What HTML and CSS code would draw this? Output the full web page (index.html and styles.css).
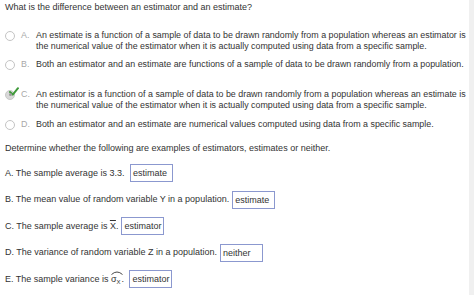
FILE: index.html
```html
<!DOCTYPE html>
<html>
<head>
<meta charset="utf-8">
<link rel="stylesheet" href="styles.css">
</head>
<body>
<div class="page">
  <div class="main">
    <p class="question">What is the difference between an estimator and an estimate?</p>
    <div class="options">
      <div class="option opt-a">
        <span class="radio"></span><span class="letter">A.</span>
        <span class="otext">An estimate is a function of a sample of data to be drawn randomly from a population whereas an estimator is the numerical value of the estimator when it is actually computed using data from a specific sample.</span>
      </div>
      <div class="option opt-b">
        <span class="radio"></span><span class="letter">B.</span>
        <span class="otext">Both an estimator and an estimate are functions of a sample of data to be drawn randomly from a population.</span>
      </div>
      <div class="option opt-c">
        <span class="radio checked"><svg class="check" viewBox="0 0 10 9" width="10" height="9"><path d="M1 5 L3.8 7.6 L9 1.2" fill="none" stroke="#3f9a3a" stroke-width="2" stroke-linecap="round" stroke-linejoin="round"/></svg></span><span class="letter">C.</span>
        <span class="otext">An estimator is a function of a sample of data to be drawn randomly from a population whereas an estimate is the numerical value of the estimator when it is actually computed using data from a specific sample.</span>
      </div>
      <div class="option opt-d">
        <span class="radio"></span><span class="letter">D.</span>
        <span class="otext">Both an estimator and an estimate are numerical values computed using data from a specific sample.</span>
      </div>
    </div>
    <p class="instr">Determine whether the following are examples of estimators, estimates or neither.</p>
    <div class="rows">
      <div class="row">A. The sample average is 3.3. <span class="box">estimate</span></div>
      <div class="row">B. The mean value of random variable Y in a population.<span class="box">estimate</span></div>
      <div class="row">C. The sample average is <span class="xbar">X</span>.<span class="box">estimator</span></div>
      <div class="row">D. The variance of random variable Z in a population.<span class="box">neither</span></div>
      <div class="row">E. The sample variance is <span class="sig"><svg class="hat" viewBox="0 0 12 4" width="12" height="4"><path d="M0.5 3.5 Q6 -1.5 11.5 3.5" fill="none" stroke="#333" stroke-width="0.9"/></svg>&#963;<sub>X</sub></span>. <span class="box">estimator</span></div>
    </div>
  </div>
  <div class="scroll"></div>
</div>
</body>
</html>
```
FILE: styles.css
```css
html, body {
  margin: 0;
  padding: 0;
  background: #ffffff;
}
body {
  font-family: "Liberation Sans", Arial, sans-serif;
  font-size: 9px;
  line-height: 11px;
  color: #333333;
}
.page {
  display: flex;
  width: 474px;
  height: 295px;
  overflow: hidden;
}
.main {
  flex: 1;
  padding: 2px 0 0 5px;
}
.scroll {
  width: 5px;
  background: #f0f0f0;
}
.question {
  margin: 0;
}
.options {
  margin-top: 16.5px;
  font-size: 8.9px;
}
.option {
  display: flex;
  align-items: flex-start;
}
.opt-b { margin-top: 7px; }
.opt-c { margin-top: 19px; }
.opt-d { margin-top: 8px; }
.radio {
  position: relative;
  flex: none;
  width: 8px;
  height: 8px;
  border: 1px solid #c4c4c4;
  border-radius: 50%;
  margin-top: 1px;
  box-sizing: content-box;
}
.radio.checked {
  background: #d8d8d8;
  border-color: #c8c8c8;
}
.radio.checked::after {
  content: "";
  position: absolute;
  left: 2.5px;
  top: 2.5px;
  width: 3px;
  height: 3px;
  border-radius: 50%;
  background: #9a9a9a;
}
.check {
  position: absolute;
  left: 3px;
  top: -4px;
}
.letter {
  flex: none;
  width: 15px;
  margin-left: 6px;
  color: #a8a8a8;
}
.otext {
  flex: 1;
}
.instr {
  margin: 13px 0 0;
}
.rows {
  margin-top: 10.5px;
  display: flex;
  flex-direction: column;
  gap: 8.5px;
}
.row {
  display: flex;
  align-items: center;
  height: 18px;
  white-space: pre;
}
.box {
  display: inline-block;
  box-sizing: border-box;
  width: 43px;
  height: 18px;
  line-height: 16px;
  padding-left: 2px;
  margin-left: 3px;
  border: 1px solid #8b98cf;
}
.xbar {
  text-decoration: overline;
}
.sig {
  position: relative;
  display: inline-block;
  padding-right: 1px;
}
.sig sub {
  font-size: 6px;
  line-height: 0;
  vertical-align: -2px;
}
.hat {
  position: absolute;
  left: 0;
  top: -3px;
}
```
